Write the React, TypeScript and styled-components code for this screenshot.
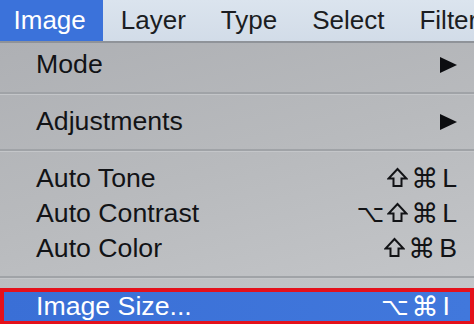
import styled, { createGlobalStyle } from "styled-components";

const GlobalStyle = createGlobalStyle`
  html, body {
    margin: 0;
    padding: 0;
    overflow: hidden;
    background: #b9bbbe;
  }
  body {
    font-family: "Liberation Sans", "DejaVu Sans", Arial, sans-serif;
  }
`;

const Screen = styled.div`
  width: 474px;
  height: 324px;
  overflow: hidden;
  display: flex;
  flex-direction: column;
`;

const MenuBar = styled.div`
  display: flex;
  height: 41px;
  flex-shrink: 0;
  background: linear-gradient(180deg, #dbe4ee, #d2dce8);
  border-bottom: 2px solid #8f9399;
  white-space: nowrap;
`;

const BarItem = styled.div<{ $active?: boolean }>`
  display: flex;
  align-items: center;
  padding: 0 17.5px;
  font-size: 26px;
  color: ${(p) => (p.$active ? "#ffffff" : "#1b1d22")};
  background: ${(p) => (p.$active ? "#3b72da" : "transparent")};
  &:first-child {
    margin-left: -4px;
  }
`;

const Dropdown = styled.div`
  flex: 1;
  display: flex;
  flex-direction: column;
  padding-top: 4px;
  background: linear-gradient(165deg, #aeb0b4 0%, #b8babd 45%, #c6c8cb 100%);
`;

const Row = styled.div<{ $selected?: boolean }>`
  display: flex;
  align-items: center;
  justify-content: space-between;
  height: 35px;
  padding: 0 17px 0 36px;
  font-size: 26.7px;
  color: #121316;
  flex-shrink: 0;

  ${(p) =>
    p.$selected &&
    `
    box-sizing: border-box;
    height: 37px;
    padding: 0 20px 0 32px;
    color: #ffffff;
    background: linear-gradient(90deg, #3a6fd6, #4178dc);
    border: 4px solid #e4111b;
  `}
`;

const Separator = styled.div`
  height: 22px;
  display: flex;
  align-items: center;
  flex-shrink: 0;

  &::after {
    content: "";
    display: block;
    width: 100%;
    height: 2px;
    background: #a0a3a7;
    border-bottom: 1px solid #c4c6c9;
  }
`;

const Shortcut = styled.span`
  display: flex;
  align-items: center;
  gap: 3px;
  font-size: 24px;
  font-family: "DejaVu Sans", "Liberation Sans", sans-serif;
`;

const CmdGlyph = styled.span`
  font-size: 27px;
`;

const ShortcutKey = styled.span`
  font-family: "Liberation Sans", sans-serif;
  font-size: 26.7px;
  margin-left: 1px;
`;

const ShiftIcon = styled.svg`
  width: 21px;
  height: 21px;
  margin-top: -2px;
`;

const Arrow = styled.span`
  width: 0;
  height: 0;
  border-top: 8.5px solid transparent;
  border-bottom: 8.5px solid transparent;
  border-left: 17px solid #0c0d10;
`;

const menus = ["Image", "Layer", "Type", "Select", "Filter"];

const Shift = () => (
  <ShiftIcon viewBox="0 0 21 21">
    <path
      d="M10.5 2 L19.5 11.5 H14.5 V19 H6.5 V11.5 H1.5 Z"
      fill="none"
      stroke="currentColor"
      strokeWidth="2"
      strokeLinejoin="miter"
    />
  </ShiftIcon>
);

const Keys = ({ opt, shift, k }: { opt?: boolean; shift?: boolean; k: string }) => (
  <Shortcut>
    {opt && <span>⌥</span>}
    {shift && <Shift />}
    <CmdGlyph>⌘</CmdGlyph>
    <ShortcutKey>{k}</ShortcutKey>
  </Shortcut>
);

export default function App() {
  return (
    <Screen>
      <GlobalStyle />
      <MenuBar>
        {menus.map((m, i) => (
          <BarItem key={m} $active={i === 0}>
            {m}
          </BarItem>
        ))}
      </MenuBar>
      <Dropdown>
        <Row>
          <span>Mode</span>
          <Arrow />
        </Row>
        <Separator />
        <Row>
          <span>Adjustments</span>
          <Arrow />
        </Row>
        <Separator />
        <Row>
          <span>Auto Tone</span>
          <Keys shift k="L" />
        </Row>
        <Row>
          <span>Auto Contrast</span>
          <Keys opt shift k="L" />
        </Row>
        <Row>
          <span>Auto Color</span>
          <Keys shift k="B" />
        </Row>
        <Separator />
        <Row $selected>
          <span>Image Size...</span>
          <Keys opt k="I" />
        </Row>
      </Dropdown>
    </Screen>
  );
}
